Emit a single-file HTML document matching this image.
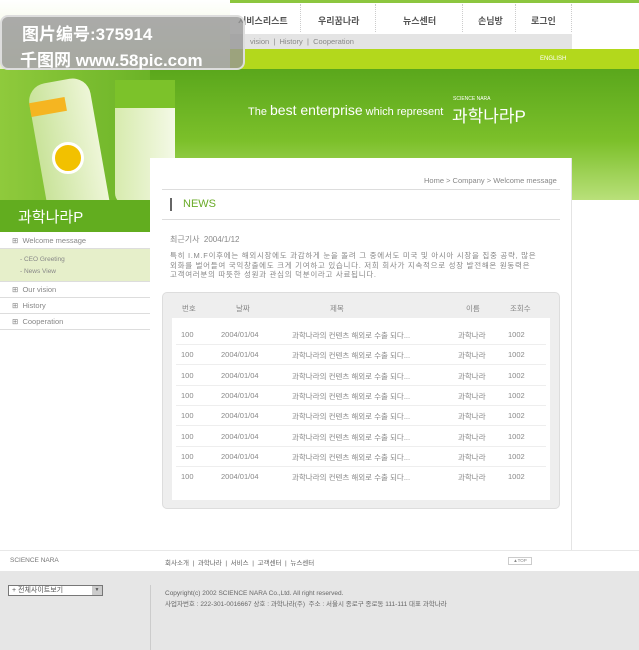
<!DOCTYPE html>
<html><head><meta charset="utf-8"><style>
*{margin:0;padding:0;box-sizing:border-box}
body{width:639px;height:650px;overflow:hidden;background:#fff;font-family:"Liberation Sans","Noto Sans CJK KR",sans-serif;color:#777;position:relative}
.a{position:absolute}
.t{font-size:7.5px;color:#888}
</style></head><body>
<div class="a" style="left:0;top:0;width:639px;height:3px;background:#8cc63f"></div>
<div class="a" style="left:238px;top:14px;font-size:9px;font-weight:bold;color:#555">서비스리스트</div>
<div class="a" style="left:318px;top:14px;font-size:9px;font-weight:bold;color:#555">우리꿈나라</div>
<div class="a" style="left:403px;top:14px;font-size:9px;font-weight:bold;color:#555">뉴스센터</div>
<div class="a" style="left:478px;top:14px;font-size:9px;font-weight:bold;color:#555">손님방</div>
<div class="a" style="left:531px;top:14px;font-size:9px;font-weight:bold;color:#555">로그인</div>
<div class="a" style="left:300px;top:4px;width:1px;height:28px;border-left:1px dotted #ccc"></div>
<div class="a" style="left:375px;top:4px;width:1px;height:28px;border-left:1px dotted #ccc"></div>
<div class="a" style="left:462px;top:4px;width:1px;height:28px;border-left:1px dotted #ccc"></div>
<div class="a" style="left:515px;top:4px;width:1px;height:28px;border-left:1px dotted #ccc"></div>
<div class="a" style="left:571px;top:4px;width:1px;height:28px;border-left:1px dotted #ccc"></div>
<div class="a" style="left:215px;top:34px;width:357px;height:15px;background:#e4e4e4"></div>
<div class="a t" style="left:250px;top:37px;font-size:7.5px">vision &nbsp;| &nbsp;History &nbsp;| &nbsp;Cooperation</div>
<div class="a" style="left:200px;top:49px;width:439px;height:20px;background:#b3d81c"></div>
<div class="a" style="left:540px;top:56px;font-size:6px;color:#fff">ENGLISH</div>
<div class="a" style="left:0;top:69px;width:639px;height:131px;background:linear-gradient(180deg,#5aa71c,#7cc02a 55%,#b9e07a)"></div>
<div class="a" style="left:0;top:0;width:230px;height:69px;background:linear-gradient(180deg,#fff,#e8f3c8)"></div>
<div class="a" style="left:0;top:69px;width:150px;height:131px;background:linear-gradient(90deg,#8fca3c,#6bb327)"></div>
<div class="a" style="left:38px;top:80px;width:62px;height:140px;background:linear-gradient(90deg,#c9e39a,#eef6d8);border-radius:18px 18px 6px 6px;transform:rotate(-10deg)"></div>
<div class="a" style="left:30px;top:100px;width:36px;height:14px;background:#f5b521;transform:rotate(-10deg)"></div>
<div class="a" style="left:52px;top:142px;width:32px;height:32px;border-radius:50%;background:#f2c100;border:3px solid #fff"></div>
<div class="a" style="left:115px;top:80px;width:60px;height:125px;background:linear-gradient(90deg,#d7ebae,#f4f9e6);border-radius:12px"></div>
<div class="a" style="left:115px;top:80px;width:60px;height:28px;background:#7cc22a"></div>
<div class="a" style="left:0;top:15px;width:245px;height:55px;background:rgba(150,150,150,.8);border:2px solid #ddd;border-radius:8px"></div>
<div class="a" style="left:22px;top:20px;font-size:17px;font-weight:bold;color:#fff">图片编号:375914</div>
<div class="a" style="left:20px;top:46px;font-size:17px;font-weight:bold;color:#fff">千图网 www.58pic.com</div>
<div class="a" style="left:248px;top:102px;font-size:11px;color:#fff">The <span style="font-size:14px">best enterprise</span> which represent</div>
<div class="a" style="left:453px;top:96px;font-size:5px;color:#fff">SCIENCE NARA</div>
<div class="a" style="left:452px;top:102px;font-size:17px;color:#fff">과학나라P</div>
<div class="a" style="left:150px;top:158px;width:422px;height:392px;background:#fff;border-right:1px solid #e4e4e4"></div>
<div class="a t" style="left:424px;top:176px">Home &gt; Company &gt; Welcome message</div>
<div class="a" style="left:162px;top:189px;width:398px;height:1px;background:#ddd"></div>
<div class="a" style="left:170px;top:198px;width:2px;height:13px;background:#666"></div>
<div class="a" style="left:183px;top:198px;font-size:11px;color:#6aab28">NEWS</div>
<div class="a" style="left:162px;top:219px;width:398px;height:1px;background:#ddd"></div>
<div class="a t" style="left:170px;top:234px;font-size:8px">최근기사 &nbsp;2004/1/12</div>
<div class="a t" style="left:170px;top:251px;line-height:9.5px;white-space:nowrap;font-size:7.5px;letter-spacing:0.7px">특히 I.M.F이후에는 해외시장에도 과감하게 눈을 돌려 그 중에서도 미국 및 아시아 시장을 집중 공략, 많은<br>외화를 벌어들여 국익창출에도 크게 기여하고 있습니다. 저희 회사가 지속적으로 성장 발전해온 원동력은<br>고객여러분의 따뜻한 성원과 관심의 덕분이라고 사료됩니다.</div>
<div class="a" style="left:162px;top:292px;width:398px;height:217px;background:#eee;border:1px solid #ddd;border-radius:5px"></div>
<div class="a" style="left:172px;top:318px;width:378px;height:182px;background:#fff"></div>
<div class="a t" style="left:182px;top:303px">번호</div><div class="a t" style="left:236px;top:303px">날짜</div><div class="a t" style="left:330px;top:303px">제목</div><div class="a t" style="left:466px;top:303px">이름</div><div class="a t" style="left:510px;top:303px">조회수</div>
<div id="rows"></div>
<script>
var h='';for(var i=0;i<8;i++){var y=330+i*20.3;h+='<div class="a t" style="left:181px;top:'+y+'px">100</div><div class="a t" style="left:221px;top:'+y+'px">2004/01/04</div><div class="a t" style="left:292px;top:'+y+'px">과학나라의 컨텐츠 해외로 수출 되다...</div><div class="a t" style="left:458px;top:'+y+'px">과학나라</div><div class="a t" style="left:508px;top:'+y+'px">1002</div>';if(i<7)h+='<div class="a" style="left:176px;top:'+(y+14)+'px;width:370px;height:1px;background:#eee"></div>';}
document.getElementById('rows').innerHTML=h;
</script>
<div class="a" style="left:0;top:200px;width:150px;height:32px;background:#62ad1f"></div>
<div class="a" style="left:18px;top:206px;font-size:15px;color:#fff">과학나라P</div>
<div class="a" style="left:0;top:232px;width:150px;height:17px;border-bottom:1px solid #ddd"></div>
<div class="a t" style="left:12px;top:236px">⊞ &nbsp;Welcome message</div>
<div class="a" style="left:0;top:249px;width:150px;height:32px;background:#e6efca"></div>
<div class="a" style="left:20px;top:254px;font-size:6.5px;color:#888;line-height:12px">- CEO Greeting<br>- News View</div>
<div class="a t" style="left:12px;top:285px">⊞ &nbsp;Our vision</div>
<div class="a" style="left:0;top:297px;width:150px;height:1px;background:#ddd"></div>
<div class="a t" style="left:12px;top:301px">⊞ &nbsp;History</div>
<div class="a" style="left:0;top:313px;width:150px;height:1px;background:#ddd"></div>
<div class="a t" style="left:12px;top:317px">⊞ &nbsp;Cooperation</div>
<div class="a" style="left:0;top:329px;width:150px;height:1px;background:#ddd"></div>
<div class="a" style="left:0;top:281px;width:150px;height:1px;background:#ddd"></div>
<div class="a" style="left:0;top:550px;width:639px;height:1px;background:#e8e8e8"></div>
<div class="a" style="left:10px;top:557px;font-size:6.5px;color:#777">SCIENCE NARA</div>
<div class="a" style="left:165px;top:557px;font-size:6.5px;color:#666">회사소개 &nbsp;| &nbsp;과학나라 &nbsp;| &nbsp;서비스 &nbsp;| &nbsp;고객센터 &nbsp;| &nbsp;뉴스센터</div>
<div class="a" style="left:508px;top:557px;width:24px;height:8px;border:1px solid #ccc;font-size:4.5px;color:#888;text-align:center">▲TOP</div>
<div class="a" style="left:0;top:571px;width:639px;height:79px;background:#e6e6e6"></div>
<div class="a" style="left:150px;top:585px;width:1px;height:65px;background:#ccc"></div>
<div class="a" style="left:8px;top:585px;width:95px;height:11px;background:#fff;border:1px solid #777;font-size:7px;color:#555;padding-left:3px;line-height:9px">+ 전체사이트보기<span style="position:absolute;right:0;top:0;width:10px;height:9px;background:#ccc;font-size:5px;text-align:center">▼</span></div>
<div class="a" style="left:165px;top:588px;font-size:6.5px;color:#666;line-height:11px">Copyright(c) 2002 SCIENCE NARA Co.,Ltd. All right reserved.<br>사업자번호 : 222-301-0016667 상호 : 과학나라(주) &nbsp;주소 : 서울시 종로구 종로동 111-111 대표 과학나라</div>
</body></html>
